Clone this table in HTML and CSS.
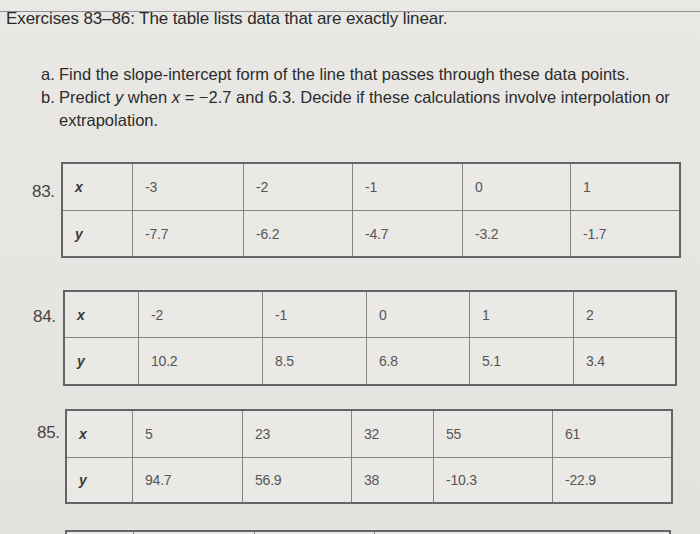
FILE: index.html
```
<!DOCTYPE html>
<html>
<head>
<meta charset="utf-8">
<link rel="stylesheet" href="styles.css">
</head>
<body>
<div class="page">
  <div class="title"><span class="title-text">Exercises 83–86: The table lists data that are exactly linear.</span></div>

  <div class="tasks">
    <div class="task"><span class="mk">a.</span><span class="tx">Find the slope-intercept form of the line that passes through these data points.</span></div>
    <div class="task"><span class="mk">b.</span><span class="tx">Predict <i>y</i> when <i>x</i> = −2.7 and 6.3. Decide if these calculations involve interpolation or extrapolation.</span></div>
  </div>

  <div class="ex ex83">
    <div class="num">83.</div>
    <div class="grid g83">
      <div class="c lab">x</div><div class="c">-3</div><div class="c">-2</div><div class="c">-1</div><div class="c">0</div><div class="c">1</div>
      <div class="c lab">y</div><div class="c">-7.7</div><div class="c">-6.2</div><div class="c">-4.7</div><div class="c">-3.2</div><div class="c">-1.7</div>
    </div>
  </div>

  <div class="ex ex84">
    <div class="num">84.</div>
    <div class="grid g84">
      <div class="c lab">x</div><div class="c">-2</div><div class="c">-1</div><div class="c">0</div><div class="c">1</div><div class="c">2</div>
      <div class="c lab">y</div><div class="c">10.2</div><div class="c">8.5</div><div class="c">6.8</div><div class="c">5.1</div><div class="c">3.4</div>
    </div>
  </div>

  <div class="ex ex85">
    <div class="num">85.</div>
    <div class="grid g85">
      <div class="c lab">x</div><div class="c">5</div><div class="c">23</div><div class="c">32</div><div class="c">55</div><div class="c">61</div>
      <div class="c lab">y</div><div class="c">94.7</div><div class="c">56.9</div><div class="c">38</div><div class="c">-10.3</div><div class="c">-22.9</div>
    </div>
  </div>

  <div class="ex ex86">
    <div class="num"></div>
    <div class="grid g86">
      <div class="c"></div><div class="c"></div><div class="c"></div><div class="c"></div>
    </div>
  </div>
</div>
</body>
</html>
```

FILE: styles.css
```
html, body {
  margin: 0;
  padding: 0;
  height: 100%;
  overflow: hidden;
}

body {
  background: linear-gradient(180deg, #e9e8e5 0%, #e6e5e2 50%, #e3e2df 100%);
  font-family: "Liberation Sans", Arial, sans-serif;
  color: #2e2e2e;
}

.page {
  display: flex;
  flex-direction: column;
}

.title {
  margin-top: 11px;
  border-top: 1px solid #8f9096;
  padding-left: 6px;
  height: 13px;
  line-height: 13px;
  font-size: 17px;
  color: #2a2a2a;
  letter-spacing: -0.1px;
  white-space: nowrap;
}

.tasks {
  margin-top: 38px;
  padding-left: 41px;
  width: 640px;
  font-size: 16.5px;
  line-height: 23px;
  color: #2c2c2c;
}

.task {
  display: flex;
}

.mk {
  flex: 0 0 18px;
}

.tx i {
  font-style: italic;
}

.ex {
  display: flex;
  align-items: flex-start;
}

.ex83 { margin-top: 30px; padding-left: 32px; }
.ex84 { margin-top: 32px; padding-left: 33px; }
.ex85 { margin-top: 23px; padding-left: 37px; }
.ex86 { margin-top: 26px; padding-left: 37px; }

.ex83 .num { width: 29px; padding-top: 20px; }
.ex84 .num { width: 30px; padding-top: 17px; }
.ex85 .num { width: 28px; padding-top: 14px; }
.ex86 .num { width: 28px; }

.num {
  font-size: 17px;
  line-height: 20px;
  color: #454545;
  letter-spacing: -0.3px;
}

.grid {
  display: grid;
  gap: 1px;
  background: #858585;
  border: 2px solid #646567;
}

.g83 {
  grid-template-columns: 69px 110px 108px 109px 107px 108px;
  grid-template-rows: 46px 45px;
}

.g84 {
  grid-template-columns: 73px 123px 103px 102px 103px 101px;
  grid-template-rows: 45px 46px;
}

.g85 {
  grid-template-columns: 65px 109px 108px 81px 118px 118px;
  grid-template-rows: 46px 44px;
}

.g86 {
  grid-template-columns: 66px 120px 119px 294px;
  grid-template-rows: 40px;
}

.c {
  background: #eae9e6;
  display: flex;
  align-items: center;
  padding-left: 12px;
  font-size: 14px;
  color: #565656;
  letter-spacing: -0.2px;
}

.lab {
  font-style: italic;
  font-weight: bold;
  color: #3a3a3a;
  font-size: 14px;
}
```
